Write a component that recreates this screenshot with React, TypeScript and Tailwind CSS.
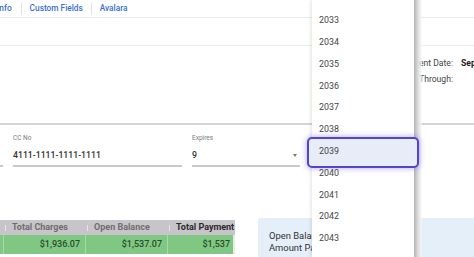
import React from "react";

const years = [2033, 2034, 2035, 2036, 2037, 2038, 2039, 2040, 2041, 2042, 2043];

function Field({ label, value, width, select }: { label: string; value: string; width: string; select?: boolean }) {
    return (
        <div className={`flex flex-col ${width}`}>
            <div className="mt-[10px] text-[6.5px] leading-[7px] text-[#7a7a7a]">{label}</div>
            <div className="mt-[6px] h-[19px] border-b-2 border-[#c9c9c9] flex items-start justify-between">
                <span className="text-[8.7px] leading-[14px] text-[#333] font-medium">{value}</span>
                {select && <span className="mt-[6px] mr-[3px] w-0 h-0 border-l-[2.5px] border-r-[2.5px] border-t-[3px] border-l-transparent border-r-transparent border-t-[#777]" />}
            </div>
        </div>
    );
}

export default function App() {
    return (
        <div className="relative w-[474px] h-[257px] overflow-hidden bg-white font-['Roboto',sans-serif]">
            {/* tabs */}
            <div className="h-[18px] border-b border-[#ececec] flex items-center text-[8.3px] font-medium text-[#3a6fd0]">
                <span className="-ml-[3px] pr-[9px]">Info</span>
                <span className="h-[12px] w-px bg-[#e4e4e4]" />
                <span className="px-[8px]">Custom Fields</span>
                <span className="h-[12px] w-px bg-[#e4e4e4]" />
                <span className="px-[8px]">Avalara</span>
            </div>
            <div className="h-[28px] border-b border-[#ececec]" />

            {/* summary */}
            <div className="h-[79px] border-b-2 border-[#d3d3d3]">
                <div className="pl-[390px] pt-[9px] grid grid-cols-[63px_auto] gap-x-[8px] text-[8.6px] leading-[16px] text-[#444] whitespace-nowrap">
                    <span className="text-right">Statement Date:</span>
                    <span className="font-bold text-[#222]">Sep 12, 2024</span>
                    <span className="text-right">Billed Through:</span>
                    <span />
                </div>
            </div>

            {/* card row */}
            <div className="flex gap-[10px]">
                <div className="w-[3px] h-[42px] border-b-2 border-[#c9c9c9]" />
                <Field label="CC No" value="4111-1111-1111-1111" width="w-[169px]" />
                <Field label="Expires" value="9" width="w-[108px]" select />
            </div>

            {/* totals */}
            <div className="mt-[51px] flex items-start">
                <div className="mt-[2px] w-[235px] text-[9px]">
                    <div className="grid grid-cols-[4px_82px_82px_67px] h-[15px] bg-[#c7c5ca] font-bold">
                        <div />
                        <div className="flex items-center gap-[6px] pl-[1px] text-[#6e6e6e]">
                            <span className="h-[6px] w-px bg-[#e6e6e6]" />Total Charges
                        </div>
                        <div className="flex items-center gap-[6px] pl-[1px] text-[#6e6e6e]">
                            <span className="h-[6px] w-px bg-[#e6e6e6]" />Open Balance
                        </div>
                        <div className="flex items-center gap-[6px] pl-[1px] text-[#2a2a2a]">
                            <span className="h-[6px] w-px bg-[#e6e6e6]" />Total Payment
                        </div>
                    </div>
                    <div className="grid grid-cols-[4px_82px_82px_67px] h-[19px] bg-[#81c784] font-medium text-[#284e28]">
                        <div className="border-r border-[#a9d8ab]" />
                        <div className="flex items-center justify-end pr-[5px] border-r border-[#a9d8ab]">$1,936.07</div>
                        <div className="flex items-center justify-end pr-[5px] border-r border-[#a9d8ab]">$1,537.07</div>
                        <div className="flex items-center justify-end pr-[3px] border-r-2 border-[#dff0df]">$1,537</div>
                    </div>
                </div>
                <div className="ml-[23px] flex-1 h-[40px] bg-[#e4effa] pl-[11px] pt-[12px] text-[9.4px] leading-[12px] text-[#333] whitespace-nowrap">
                    <div>Open Balance:</div>
                    <div>Amount Paid:</div>
                </div>
            </div>

            {/* year dropdown */}
            <div className="absolute left-[312px] top-0 bottom-0 w-[102px] bg-white shadow-[-1px_0_4px_rgba(0,0,0,0.12)]">
                <div className="absolute top-0 bottom-0 -right-[8px] w-[8px] bg-gradient-to-r from-[#b4b4b4] via-[#dcdcdc] to-[rgba(255,255,255,0.6)]" />
                <div className="pt-[10px]">
                    {years.map((y) => (
                        <div key={y} className="relative h-[21.8px] flex items-center px-[7px] text-[8.9px] text-[#444]">
                            {y === 2039 && (
                                <div className="absolute -left-[5px] -right-[5px] -top-[4px] -bottom-[5px] rounded-[5px] border-2 border-[#5145cd] bg-[#e8ebf8] shadow-[0_0_6px_rgba(110,90,240,0.55)]" />
                            )}
                            <span className="relative">{y}</span>
                        </div>
                    ))}
                </div>
            </div>
        </div>
    );
}
